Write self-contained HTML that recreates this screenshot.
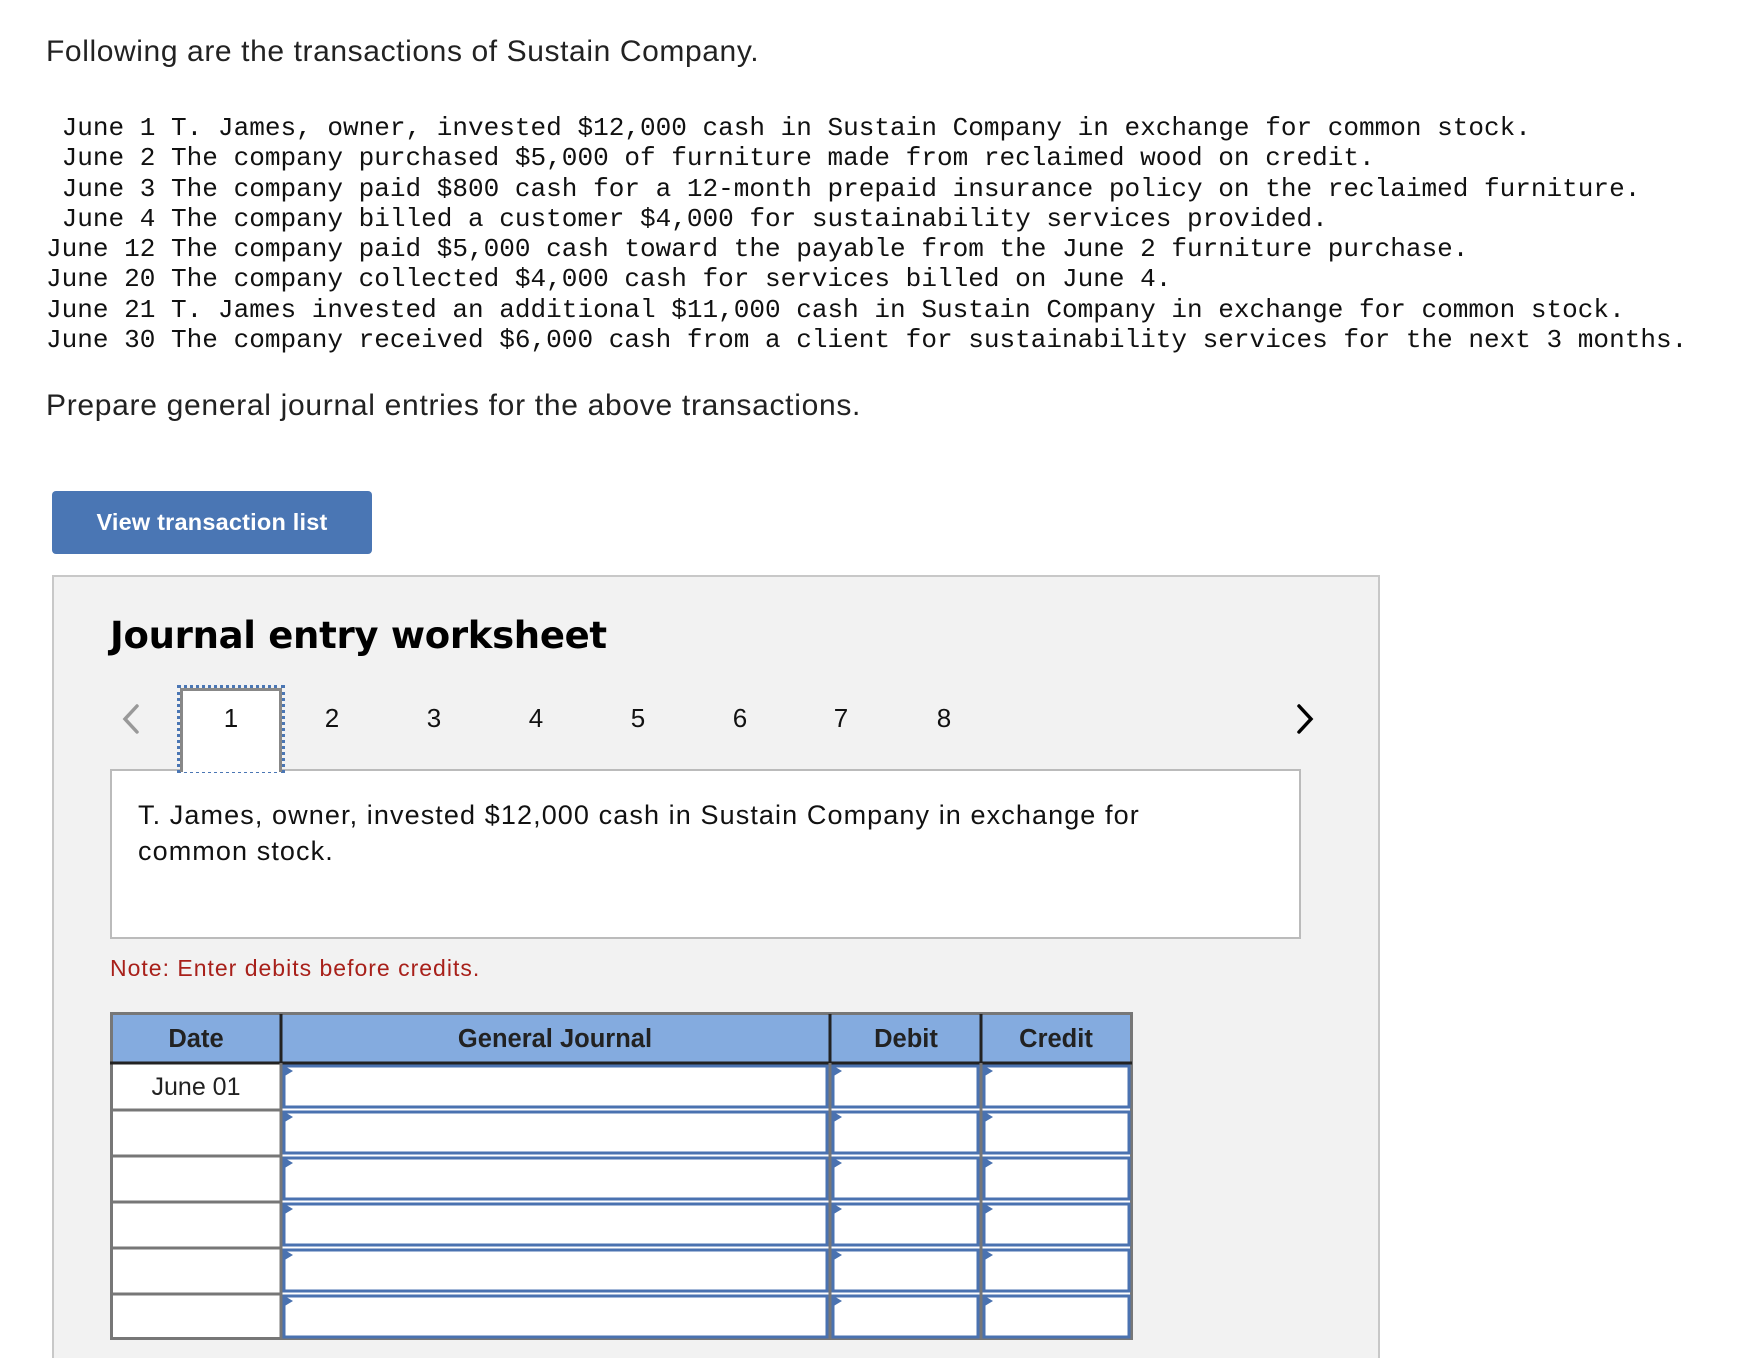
<!DOCTYPE html>
<html><head><meta charset="utf-8"><style>
*{margin:0;padding:0;box-sizing:border-box}
html,body{width:1764px;height:1358px;overflow:hidden}
body{background:#fff;position:relative;font-family:"Liberation Sans",Arial,sans-serif;color:#222}
.a{position:absolute;white-space:nowrap}
.mono{font-family:"Liberation Mono",monospace;font-size:26.05px;line-height:30.3px;white-space:pre;color:#111}
.panel{position:absolute;left:52px;top:575px;width:1328px;height:783px;background:#f2f2f2;border:2px solid #c8c8c8;border-bottom:none}
.num{position:absolute;top:703px;font-size:26px;color:#111;transform:translateX(-50%)}
</style></head><body>
<div class="a" style="left:46px;top:35px;font-size:30px;letter-spacing:0.6px;color:#222">Following are the transactions of Sustain Company.</div>
<div class="a mono" style="left:46px;top:113px"> June 1 T. James, owner, invested $12,000 cash in Sustain Company in exchange for common stock.
 June 2 The company purchased $5,000 of furniture made from reclaimed wood on credit.
 June 3 The company paid $800 cash for a 12-month prepaid insurance policy on the reclaimed furniture.
 June 4 The company billed a customer $4,000 for sustainability services provided.
June 12 The company paid $5,000 cash toward the payable from the June 2 furniture purchase.
June 20 The company collected $4,000 cash for services billed on June 4.
June 21 T. James invested an additional $11,000 cash in Sustain Company in exchange for common stock.
June 30 The company received $6,000 cash from a client for sustainability services for the next 3 months.</div>
<div class="a" style="left:46px;top:389px;font-size:30px;letter-spacing:0.7px;color:#222">Prepare general journal entries for the above transactions.</div>
<div class="a" style="left:52px;top:491px;width:320px;height:63px;background:#4a76b4;border-radius:4px;color:#fff;font-weight:bold;font-size:23.5px;letter-spacing:0.2px;text-align:center;line-height:63px">View transaction list</div>
<div class="panel"></div>
<div class="a" style="left:110px;top:614px;font-family:'DejaVu Sans',sans-serif;font-weight:bold;font-size:37px;letter-spacing:-0.3px;color:#000">Journal entry worksheet</div>
<svg class="a" style="left:115px;top:700px" width="30" height="40"><path d="M22 6 L10 19 L22 32" fill="none" stroke="#999" stroke-width="3.5" stroke-linecap="round"/></svg>
<svg class="a" style="left:1290px;top:700px" width="30" height="40"><path d="M9 6 L21 19 L9 32" fill="none" stroke="#000" stroke-width="3.5" stroke-linecap="round"/></svg>
<div class="a" style="left:110px;top:769px;width:1191px;height:170px;background:#fff;border:2px solid #bbb"></div>
<div class="a" style="left:177px;top:685px;width:108px;height:88px;border:3px dotted #4a76b4"></div>
<div class="a" style="left:180px;top:688px;width:102px;height:84px;background:#fff;border:3px solid #888;border-bottom:none"></div>
<div class="num" style="left:231px">1</div>
<div class="num" style="left:332px">2</div>
<div class="num" style="left:434px">3</div>
<div class="num" style="left:536px">4</div>
<div class="num" style="left:638px">5</div>
<div class="num" style="left:740px">6</div>
<div class="num" style="left:841px">7</div>
<div class="num" style="left:944px">8</div>
<div class="a" style="left:138px;top:797px;font-size:27px;letter-spacing:1.1px;line-height:36px;color:#111">T. James, owner, invested $12,000 cash in Sustain Company in exchange for<br>common stock.</div>
<div class="a" style="left:110px;top:955px;font-size:23px;letter-spacing:1px;color:#a8201a">Note: Enter debits before credits.</div>
<svg class="a" style="left:110px;top:1012px" width="1023" height="330">
<rect x="1.5" y="1.5" width="1020" height="325" fill="#fff" stroke="#777" stroke-width="3"/>
<rect x="3" y="3" width="1017" height="48" fill="#84abdf"/>
<line x1="0" y1="51" x2="1022" y2="51" stroke="#222" stroke-width="3"/>
<g stroke="#222" stroke-width="3"><line x1="171" y1="2" x2="171" y2="51"/><line x1="720" y1="2" x2="720" y2="51"/><line x1="871" y1="2" x2="871" y2="51"/></g>
<g stroke="#777" stroke-width="3"><line x1="171" y1="51" x2="171" y2="328"/><line x1="720" y1="51" x2="720" y2="328"/><line x1="871" y1="51" x2="871" y2="328"/>
<line x1="0" y1="98" x2="171" y2="98"/><line x1="0" y1="144" x2="171" y2="144"/><line x1="0" y1="190" x2="171" y2="190"/><line x1="0" y1="236" x2="171" y2="236"/><line x1="0" y1="282" x2="171" y2="282"/></g>
<g fill="none" stroke="#4a72b0" stroke-width="3">
<rect x="174" y="54" width="543" height="41"/><rect x="723" y="54" width="145" height="41"/><rect x="874" y="54" width="145" height="41"/>
<rect x="174" y="100" width="543" height="41"/><rect x="723" y="100" width="145" height="41"/><rect x="874" y="100" width="145" height="41"/>
<rect x="174" y="146" width="543" height="41"/><rect x="723" y="146" width="145" height="41"/><rect x="874" y="146" width="145" height="41"/>
<rect x="174" y="192" width="543" height="41"/><rect x="723" y="192" width="145" height="41"/><rect x="874" y="192" width="145" height="41"/>
<rect x="174" y="238" width="543" height="41"/><rect x="723" y="238" width="145" height="41"/><rect x="874" y="238" width="145" height="41"/>
<rect x="174" y="284" width="543" height="41"/><rect x="723" y="284" width="145" height="41"/><rect x="874" y="284" width="145" height="41"/>
</g>
<g fill="#4a72b0">
<path d="M173 53l10 6-10 6z"/><path d="M722 53l10 6-10 6z"/><path d="M873 53l10 6-10 6z"/>
<path d="M173 99l10 6-10 6z"/><path d="M722 99l10 6-10 6z"/><path d="M873 99l10 6-10 6z"/>
<path d="M173 145l10 6-10 6z"/><path d="M722 145l10 6-10 6z"/><path d="M873 145l10 6-10 6z"/>
<path d="M173 191l10 6-10 6z"/><path d="M722 191l10 6-10 6z"/><path d="M873 191l10 6-10 6z"/>
<path d="M173 237l10 6-10 6z"/><path d="M722 237l10 6-10 6z"/><path d="M873 237l10 6-10 6z"/>
<path d="M173 283l10 6-10 6z"/><path d="M722 283l10 6-10 6z"/><path d="M873 283l10 6-10 6z"/>
</g>
<g font-family="Liberation Sans, Arial, sans-serif" font-size="25.5" font-weight="bold" fill="#222" text-anchor="middle">
<text x="86" y="35">Date</text><text x="445" y="35">General Journal</text><text x="796" y="35">Debit</text><text x="946" y="35">Credit</text>
</g>
<text x="86" y="83" font-family="Liberation Sans, Arial, sans-serif" font-size="25" fill="#222" text-anchor="middle">June 01</text>
</svg>
</body></html>
